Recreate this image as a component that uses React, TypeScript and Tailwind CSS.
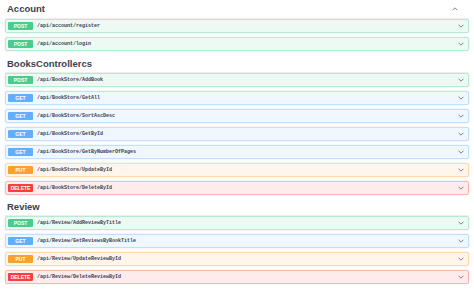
import React from 'react';

type Method = 'POST' | 'GET' | 'PUT' | 'DELETE';

interface Op {
  method: Method;
  path: string;
}

interface Section {
  name: string;
  arrow?: boolean;
  head: string;
  ops: Op[];
}

const sections: Section[] = [
  {
    name: 'Account',
    arrow: true,
    head: 'h-[19px]',
    ops: [
      { method: 'POST', path: '/api/account/register' },
      { method: 'POST', path: '/api/account/login' },
    ],
  },
  {
    name: 'BooksControllercs',
    head: 'h-[18px]',
    ops: [
      { method: 'POST', path: '/api/BookStore/AddBook' },
      { method: 'GET', path: '/api/BookStore/GetAll' },
      { method: 'GET', path: '/api/BookStore/SortAscDesc' },
      { method: 'GET', path: '/api/BookStore/GetById' },
      { method: 'GET', path: '/api/BookStore/GetByNumberOfPages' },
      { method: 'PUT', path: '/api/BookStore/UpdateById' },
      { method: 'DELETE', path: '/api/BookStore/DeleteById' },
    ],
  },
  {
    name: 'Review',
    head: 'h-[17px]',
    ops: [
      { method: 'POST', path: '/api/Review/AddReviewByTitle' },
      { method: 'GET', path: '/api/Review/GetReviewsByBookTitle' },
      { method: 'PUT', path: '/api/Review/UpdateReviewById' },
      { method: 'DELETE', path: '/api/Review/DeleteReviewById' },
    ],
  },
];

// static class names per verb, so tailwind picks them up
const styles: Record<Method, { row: string; badge: string }> = {
  POST: { row: 'bg-[#edfaf4] border-[#b6ead2]', badge: 'bg-[#49cc90]' },
  GET: { row: 'bg-[#eff7ff] border-[#c0dffe]', badge: 'bg-[#61affe]' },
  PUT: { row: 'bg-[#fff5ea] border-[#fdd9ac]', badge: 'bg-[#fca130]' },
  DELETE: { row: 'bg-[#feebeb] border-[#fcb5b5]', badge: 'bg-[#f93e3e]' },
};

function Chevron({ up }: { up?: boolean }) {
  return (
    <svg width="6" height="4" viewBox="0 0 6 4" className={up ? 'rotate-180' : ''}>
      <path d="M0.6 0.8 L3 3.2 L5.4 0.8" fill="none" stroke="#5b6170" strokeWidth="0.8" />
    </svg>
  );
}

function OpRow({ op }: { op: Op }) {
  const s = styles[op.method];
  return (
    <div
      className={`flex items-center h-[14px] mb-[4px] border rounded-[2px] shadow-[0_0_2px_rgba(0,0,0,0.12)] pl-[2px] pr-[4px] ${s.row}`}
    >
      <span
        className={`w-[25px] h-[8px] rounded-[1px] flex items-center justify-center text-white font-bold text-[5px] leading-none ${s.badge}`}
        style={{ fontFamily: '"Liberation Sans", Arial, sans-serif' }}
      >
        {op.method}
      </span>
      <span
        className="ml-[4px] text-[5px] font-bold text-[#3b4151] leading-none"
        style={{ fontFamily: '"Liberation Mono", "Courier New", monospace' }}
      >
        {op.path}
      </span>
      <span className="ml-auto flex items-center">
        <Chevron />
      </span>
    </div>
  );
}

export default function App() {
  return (
    <div className="w-[474px] h-[293px] bg-white overflow-hidden px-[5px]">
      {sections.map((sec) => (
        <div key={sec.name}>
          {/* Tag header */}
          <div className={`flex items-center pl-[2px] pr-[11px] border-b border-[#3b4151]/5 ${sec.head}`}>
            <h4
              className="text-[9.5px] font-bold text-[#3b4151] leading-none"
              style={{ fontFamily: '"Liberation Sans", Arial, sans-serif' }}
            >
              {sec.name}
            </h4>
            {sec.arrow && (
              <span className="ml-auto flex items-center">
                <Chevron up />
              </span>
            )}
          </div>
          {sec.ops.map((op) => (
            <OpRow key={op.path} op={op} />
          ))}
        </div>
      ))}
    </div>
  );
}
